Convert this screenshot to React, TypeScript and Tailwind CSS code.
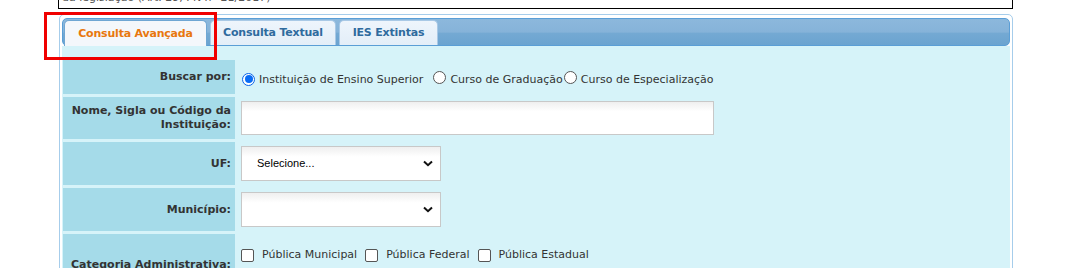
import type React from "react"

const labelCls =
  "bg-[#a5dbe9] flex items-center justify-end text-right pr-[4px] font-bold text-[11px] leading-[14px] text-[#333]"

const Radio = ({ checked = false }: { checked?: boolean }) => (
  <span
    className={
      checked
        ? "inline-flex w-[13px] h-[13px] rounded-full border border-[#0a63e8] bg-white items-center justify-center shrink-0"
        : "inline-flex w-[13px] h-[13px] rounded-full border border-[#555] bg-white shrink-0"
    }
  >
    {checked && <span className="w-[8px] h-[8px] rounded-full bg-[#0a6cf5]" />}
  </span>
)

const Checkbox = () => (
  <span className="inline-block w-[13px] h-[13px] rounded-[2px] border border-[#555] bg-white shrink-0" />
)

const Chevron = () => (
  <svg width="10" height="7" viewBox="0 0 10 7" className="shrink-0">
    <path d="M1 1.5 L5 5.2 L9 1.5" fill="none" stroke="#111" strokeWidth="2" />
  </svg>
)

const Select: React.FC<{ text?: string }> = ({ text }) => (
  <div className="w-[200px] h-[35px] border border-[#c8c8c8] bg-[linear-gradient(#efefef,#ffffff_30%)] flex items-center justify-between pl-[15px] pr-[7px] font-['Liberation_Sans',Arial,sans-serif] text-[11px] text-black">
    <span>{text}</span>
    <Chevron />
  </div>
)

const App: React.FC = () => {
  return (
    <div className="relative w-[1070px] h-[268px] overflow-hidden bg-white font-['DejaVu_Sans',Verdana,sans-serif]">
      {/* caixa de texto acima, cortada */}
      <div className="ml-[58px] w-[955px] -mt-[10px] h-[19px] border border-black px-[3px] text-[11px] leading-[14px] text-[#555]">
        da legislação (Art. 29, PN n° 21/2017)
      </div>

      <div className="ml-[59px] mt-[5px] w-[954px] h-[260px] rounded-t-[5px] border border-[#a6cdeb] pt-[3px] px-[2px]">
        {/* barra de abas */}
        <div className="h-[28px] rounded-[5px] border border-[#5a9ed6] bg-[linear-gradient(#8cb8dc,#86b3d9_50%,#74a9d3_55%,#6ba3d0)] flex items-end gap-[3px] pl-[1px]">
          <div className="w-[143px] h-[26px] -mb-[1px] rounded-t-[5px] border border-b-0 border-[#6fa6d3] bg-[#f4f7fb] flex items-center justify-center pt-[1px] font-bold text-[11px] tracking-[-0.2px] text-[#e8770e]">
            Consulta Avançada
          </div>
          <div className="w-[126px] h-[25px] rounded-t-[5px] border border-b-0 border-[#a9c9e6] bg-[linear-gradient(#eef5fc,#e3eef8)] flex items-center justify-center font-bold text-[11px] tracking-[-0.2px] text-[#2f6b9e]">
            Consulta Textual
          </div>
          <div className="w-[99px] h-[25px] rounded-t-[5px] border border-b-0 border-[#a9c9e6] bg-[linear-gradient(#eef5fc,#e3eef8)] flex items-center justify-center font-bold text-[11px] tracking-[-0.2px] text-[#2f6b9e]">
            IES Extintas
          </div>
        </div>

        {/* conteúdo */}
        <div className="bg-[#d6f3f9] h-[230px] pt-[14px] pl-[1px]">
          <div className="grid grid-cols-[172px_1fr] gap-[3px]">
            <div className={`${labelCls} h-[34px]`}>Buscar por:</div>
            <div className="flex items-center pt-[7px] text-[11px] text-[#333]">
              <span className="ml-[4px] mr-[4px]"><Radio checked /></span>
              <span className="mr-[10px]">Instituição de Ensino Superior</span>
              <span className="mr-[4px]"><Radio /></span>
              <span className="mr-[1px]">Curso de Graduação</span>
              <span className="mr-[4px]"><Radio /></span>
              <span>Curso de Especialização</span>
            </div>

            <div className={`${labelCls} h-[42px]`}>
              Nome, Sigla ou Código da
              <br />
              Instituição:
            </div>
            <div className="flex items-center pl-[3px]">
              <div className="w-[473px] h-[34px] border border-[#c8c8c8] bg-[linear-gradient(#efefef,#ffffff_30%)]" />
            </div>

            <div className={`${labelCls} h-[43px]`}>UF:</div>
            <div className="flex items-center pl-[3px]">
              <Select text="Selecione..." />
            </div>

            <div className={`${labelCls} h-[43px]`}>Município:</div>
            <div className="flex items-center pl-[3px]">
              <Select />
            </div>

            <div className={`${labelCls} h-[62px]`}>Categoria Administrativa:</div>
            <div className="flex flex-col gap-[6px] pt-[14px] pl-[3px] text-[11px] leading-[14px] text-[#333]">
              <div className="flex items-center">
                <Checkbox />
                <span className="ml-[8px] mr-[8px]">Pública Municipal</span>
                <Checkbox />
                <span className="ml-[8px] mr-[8px]">Pública Federal</span>
                <Checkbox />
                <span className="ml-[8px]">Pública Estadual</span>
              </div>
              <div className="flex items-center">
                <Checkbox />
                <span className="ml-[8px] mr-[8px]">Privada com fins lucrativos</span>
                <Checkbox />
                <span className="ml-[8px]">Privada sem fins lucrativos</span>
              </div>
            </div>
          </div>
        </div>
      </div>

      {/* destaque vermelho */}
      <div className="absolute left-[44px] top-[12px] w-[173px] h-[48px] border-[3px] border-[#f00000]" />
    </div>
  )
}

export default App
